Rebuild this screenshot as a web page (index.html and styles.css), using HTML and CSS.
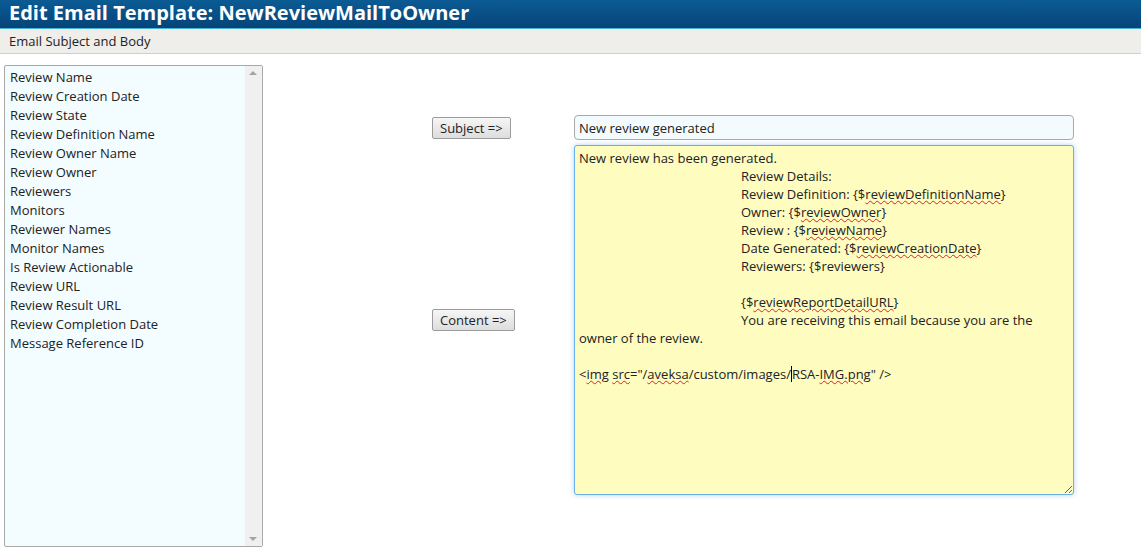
FILE: index.html
```html
<!DOCTYPE html>
<html lang="en">
<head>
    <meta charset="UTF-8">
    <meta name="viewport" content="width=device-width, initial-scale=1.0">
    <title>Edit Email Template</title>
    <link rel="stylesheet" href="styles.css">
</head>
<body>
    <div class="page-title">Edit Email Template: NewReviewMailToOwner</div>
    <div class="section-bar">Email Subject and Body</div>

    <div class="editor">
        <div class="token-list">
            <ul class="tokens">
                <li>Review Name</li>
                <li>Review Creation Date</li>
                <li>Review State</li>
                <li>Review Definition Name</li>
                <li>Review Owner Name</li>
                <li>Review Owner</li>
                <li>Reviewers</li>
                <li>Monitors</li>
                <li>Reviewer Names</li>
                <li>Monitor Names</li>
                <li>Is Review Actionable</li>
                <li>Review URL</li>
                <li>Review Result URL</li>
                <li>Review Completion Date</li>
                <li>Message Reference ID</li>
            </ul>
            <div class="scrollbar">
                <span class="arrow up"></span>
                <span class="arrow down"></span>
            </div>
        </div>

        <div class="fields">
            <div class="field-row">
                <div class="field-action"><button class="insert-button">Subject =&gt;</button></div>
                <input class="subject-input" type="text" value="New review generated">
            </div>
            <div class="field-row">
                <div class="field-action"><button class="insert-button">Content =&gt;</button></div>
                <div class="content-box" role="textbox">New review has been generated.
	Review Details:
	Review Definition: {$<span class="typo">reviewDefinitionName</span>}
	Owner: {$<span class="typo">reviewOwner</span>}
	Review : {$<span class="typo">reviewName</span>}
	Date Generated: {$<span class="typo">reviewCreationDate</span>}
	Reviewers: {$reviewers}

	{$<span class="typo">reviewReportDetailURL</span>}
	You are receiving this email because you are the owner of the review.

&lt;<span class="typo">img</span> <span class="typo">src</span>="/<span class="typo">aveksa</span>/custom/images/<span class="caret"></span>RSA-<span class="typo">IMG.png</span>" /&gt;</div>
            </div>
        </div>
    </div>
</body>
</html>
```

FILE: styles.css
```css
body {
    margin: 0;
    font-family: "Open Sans", "Noto Sans", sans-serif;
    font-size: 13px;
    color: #222;
    background: #fff;
}

.page-title {
    height: 28px;
    line-height: 26px;
    padding-left: 9px;
    font-size: 20px;
    font-weight: bold;
    color: #fff;
    background: linear-gradient(#0b5b94, #064479);
    border-bottom: 1px solid #49b6d6;
}

.section-bar {
    height: 24px;
    line-height: 24px;
    padding-left: 9px;
    background: #efeeea;
    border-bottom: 1px solid #cfcfcf;
}

.editor {
    display: flex;
    align-items: flex-start;
    padding: 11px 0 0 4px;
}

/* token picker on the left */
.token-list {
    display: flex;
    width: 257px;
    height: 480px;
    border: 1px solid #a8a8a8;
    border-radius: 2px;
    background: #f3fcff;
}

.tokens {
    flex: 1;
    list-style: none;
    margin: 0;
    padding: 2px 0 0 5px;
}

.tokens li {
    height: 19px;
    line-height: 19px;
}

.scrollbar {
    position: relative;
    width: 17px;
    background: #f0f0f0;
}

.arrow {
    position: absolute;
    left: 4px;
    width: 0;
    height: 0;
    border-left: 4px solid transparent;
    border-right: 4px solid transparent;
}

.arrow.up {
    top: 5px;
    border-bottom: 4px solid #a3a3a3;
}

.arrow.down {
    bottom: 5px;
    border-top: 4px solid #a3a3a3;
}

/* subject and body */
.fields {
    display: flex;
    flex-direction: column;
    gap: 5px;
    margin: 50px 0 0 169px;
}

.field-row {
    display: flex;
    align-items: center;
}

.field-action {
    width: 142px;
}

.insert-button {
    height: 22px;
    padding: 0 7px;
    font-family: inherit;
    font-size: 13px;
    color: #222;
    background: linear-gradient(#f6f6f6, #dddddd);
    border: 1px solid #9c9c9c;
    border-radius: 2px;
}

.subject-input {
    box-sizing: border-box;
    width: 500px;
    height: 25px;
    padding: 0 4px;
    font-family: inherit;
    font-size: 13px;
    color: #222;
    background: #f3fbff;
    border: 1px solid #a9a9a9;
    border-radius: 4px;
    outline: none;
}

.content-box {
    box-sizing: border-box;
    width: 500px;
    height: 350px;
    padding: 3px 8px 0 4px;
    line-height: 18px;
    white-space: pre-wrap;
    tab-size: 162px;
    background: #fffcc0;
    border: 1px solid #6aafe6;
    border-radius: 3px;
    box-shadow: 0 0 5px rgba(110, 175, 235, 0.55);
    overflow: auto;
    resize: both;
}

.typo {
    text-decoration: underline wavy #e02020;
    text-decoration-thickness: 1px;
    text-underline-offset: 1px;
}

.caret {
    display: inline-block;
    width: 0;
    height: 16px;
    vertical-align: -3px;
    border-left: 1px solid #000;
}
```
